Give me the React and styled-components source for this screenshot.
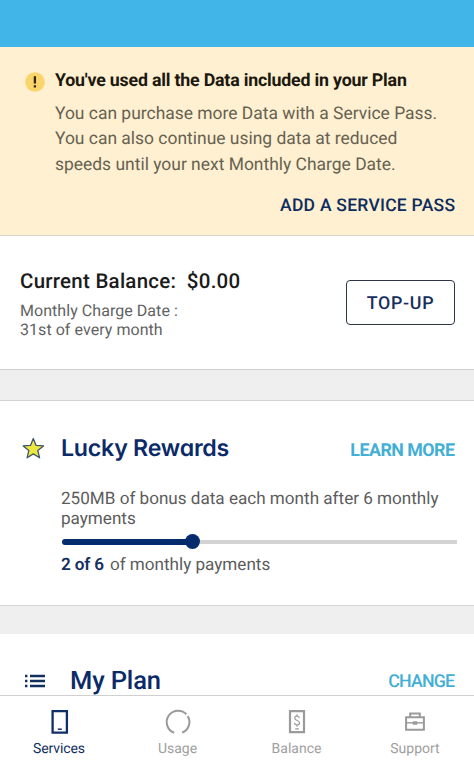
import React from 'react';
import styled, { createGlobalStyle } from 'styled-components';

const GlobalStyle = createGlobalStyle`
  * { box-sizing: border-box; }
  body { margin: 0; background: #fff; font-family: Roboto, "Liberation Sans", sans-serif; text-rendering: geometricPrecision; }
  h1, h2, p { margin: 0; }
  button { font-family: inherit; padding: 0; border: 0; background: none; text-rendering: inherit; }
`;

const Screen = styled.div`
  width: 474px;
  height: 765px;
  overflow: hidden;
  display: flex;
  flex-direction: column;
  background: #fff;
  white-space: nowrap;
`;

const StatusBar = styled.div`
  flex: 0 0 47px;
  background: #41b5e8;
`;

const Notice = styled.section`
  flex: 0 0 189px;
  display: grid;
  grid-template-columns: 30px 1fr;
  align-content: start;
  padding: 19px 19px 0 25px;
  background: #fef0d0;
  border-bottom: 1px solid #d9d4c8;
`;

const NoticeIcon = styled.svg`
  width: 20px;
  height: 20px;
  margin-top: 6px;
`;

const NoticeTitle = styled.h1`
  padding-top: 1px;
  font-size: 17.8px;
  line-height: 28px;
  font-weight: 700;
  letter-spacing: -0.2px;
  color: #1c180f;
`;

const NoticeText = styled.p`
  margin-top: 7px;
  font-size: 17.45px;
  line-height: 25.4px;
  letter-spacing: 0;
  color: #666152;
`;

const Action = styled.button`
  font-size: ${(p) => p.$size || 18}px;
  line-height: 24px;
  font-weight: ${(p) => p.$weight || 500};
  letter-spacing: ${(p) => p.$track || 0}px;
  margin-right: ${(p) => -(p.$track || 0)}px;
  margin-top: ${(p) => p.$drop || 0}px;
  color: ${(p) => (p.$dark ? '#0d2b5e' : '#43afd6')};
`;

const NoticeAction = styled.div`
  grid-column: 1 / -1;
  display: flex;
  justify-content: flex-end;
  margin-top: 16px;
`;

const BalanceSection = styled.section`
  flex: 0 0 134px;
  display: flex;
  justify-content: space-between;
  align-items: flex-start;
  padding: 32px 19px 0 20px;
  border-bottom: 1px solid #cfcfcf;
`;

const BalanceTitle = styled.h2`
  font-size: 20.5px;
  line-height: 28px;
  font-weight: 500;
  letter-spacing: 0.25px;
  white-space: pre;
  color: #1b1b1b;
`;

const ChargeDate = styled.p`
  margin-top: 6.2px;
  font-size: 16px;
  line-height: 18.4px;
  letter-spacing: 0.05px;
  color: #626262;
`;

const TopUp = styled.button`
  width: 109px;
  height: 45px;
  margin-top: 12px;
  padding-top: 1px;
  border: 1.5px solid #2c3647;
  border-radius: 4px;
  font-size: 17.8px;
  font-weight: 500;
  letter-spacing: 0.7px;
  color: #15305c;
`;

const Gap = styled.div`
  flex: 0 0 ${(p) => p.$height}px;
  background: #efefef;
  border-bottom: ${(p) => (p.$line ? '1px solid #d2d2d2' : '0')};
`;

const Rewards = styled.section`
  flex: 0 0 205px;
  padding: 32px 17px 0 22px;
  border-bottom: 1px solid #d4d4d4;
`;

const HeadRow = styled.div`
  display: flex;
  align-items: center;
  height: 30px;
  padding-right: 2px;
`;

const StarIcon = styled.svg`
  width: 23px;
  height: 23px;
  flex: none;
`;

const RewardsTitle = styled.h2`
  flex: 1;
  margin-left: 16px;
  font-family: Inter, Roboto, sans-serif;
  font-feature-settings: "cv11" 1;
  font-size: 23.2px;
  line-height: 30px;
  font-weight: 600;
  letter-spacing: -0.25px;
  color: #0b2a69;
`;

const RewardsBody = styled.div`
  padding: 26px 0 0 39px;
`;

const RewardsText = styled.p`
  font-size: 17.1px;
  line-height: 20px;
  letter-spacing: 0;
  color: #5c5c5c;
`;

const Track = styled.div`
  display: flex;
  align-items: center;
  height: 15px;
  margin: 5px 0 6px 1px;
`;

const Done = styled.div`
  flex: 0 0 125px;
  height: 6px;
  border-radius: 3px 0 0 3px;
  background: #042c6c;
`;

const Thumb = styled.div`
  flex: 0 0 15px;
  height: 15px;
  margin-left: -2px;
  border-radius: 50%;
  background: #042c6c;
`;

const Remaining = styled.div`
  flex: 1;
  height: 4px;
  background: #d3d3d3;
`;

const Count = styled.strong`
  margin-right: 6px;
  font-weight: 600;
  letter-spacing: -0.15px;
  color: #142f60;
`;

const Plan = styled.section`
  flex: 0 0 61px;
  min-height: 0;
  display: flex;
  align-items: flex-start;
  padding: 34px 19px 0 25px;
`;

const ListIcon = styled.svg`
  width: 20px;
  height: 14px;
  margin: 6px 25px 0 0;
  flex: none;
`;

const PlanTitle = styled.h2`
  flex: 1;
  font-size: 25.5px;
  line-height: 27px;
  font-weight: 500;
  letter-spacing: -0.15px;
  color: #0b2a69;
`;

const TabBar = styled.nav`
  flex: 0 0 70px;
  display: grid;
  grid-template-columns: 118px 119px 119px 118px;
  border-top: 1px solid #d0d0d0;
  background: #fff;
`;

const Tab = styled.button`
  display: flex;
  flex-direction: column;
  align-items: center;
  padding-top: 12px;
  font-size: 14px;
  line-height: 18px;
  letter-spacing: ${(p) => (p.$active ? -0.1 : 0)}px;
  color: ${(p) => (p.$active ? '#12305f' : '#a0a0a0')};
  svg { width: 28px; height: 28px; margin-bottom: 4px; color: ${(p) => (p.$active ? '#0f2f68' : '#9a9a9a')}; }
`;

const PhoneGlyph = () => (
  <svg viewBox="0 0 28 28" fill="none" stroke="currentColor">
    <path d="M7.6 3.2h14.3v21.4H7.6z" strokeWidth="2.3" />
    <path d="M12.8 21.2h4" strokeWidth="1.5" />
  </svg>
);

const UsageGlyph = () => (
  <svg viewBox="0 0 28 28" fill="none" stroke="currentColor" strokeWidth="2">
    <path d="M10.1 24.8A11.4 11.4 0 1 1 22.4 6.3" />
    <path d="M23.7 8.1A11.4 11.4 0 0 1 18.2 24.7" />
  </svg>
);

const MoneyGlyph = () => (
  <svg viewBox="0 0 28 28" fill="none" stroke="currentColor">
    <path d="M7 3.1h14v21H7z" strokeWidth="2.2" />
    <path d="M16.4 10.1c-.2-1.3-1.1-2-2.4-2s-2.3.7-2.3 2c0 3.2 4.8 1.6 4.8 4.7 0 1.4-1 2.1-2.5 2.1s-2.4-.8-2.5-2.1M14 6.2v2M14 16.8v2" strokeWidth="1.2" />
    <path d="M12.2 20.9h3.6" strokeWidth="1.3" />
  </svg>
);

const CaseGlyph = () => (
  <svg viewBox="0 0 28 28" fill="none" stroke="currentColor">
    <path d="M5.1 9.2h17.8v12.6H5.1z" strokeWidth="2" />
    <path d="M9.2 9V5.6h9.6V9" strokeWidth="2" />
    <path d="M5 14.8h18" strokeWidth="1.4" />
    <path d="M11.7 13.3h4.6v3.4h-4.6z" fill="currentColor" stroke="none" />
  </svg>
);

const tabs = [
  { label: 'Services', Icon: PhoneGlyph, active: true },
  { label: 'Usage', Icon: UsageGlyph },
  { label: 'Balance', Icon: MoneyGlyph },
  { label: 'Support', Icon: CaseGlyph },
];

export default function App() {
  return (
    <>
      <GlobalStyle />
      <Screen>
        <StatusBar />
        <Notice>
          <NoticeIcon viewBox="0 0 20 20">
            <circle cx="10" cy="10" r="9.8" fill="#fad56b" />
            <path d="M9.9 4.2v7.3M9.9 13.3v2.3" stroke="#33270f" strokeWidth="2.3" />
          </NoticeIcon>
          <div>
            <NoticeTitle>You've used all the Data included in your Plan</NoticeTitle>
            <NoticeText>
              You can purchase more Data with a Service Pass.<br />
              You can also continue using data at reduced<br />
              speeds until your next Monthly Charge Date.
            </NoticeText>
          </div>
          <NoticeAction>
            <Action $dark $size={17.5} $track={0.25}>ADD A SERVICE PASS</Action>
          </NoticeAction>
        </Notice>
        <BalanceSection>
          <div>
            <BalanceTitle>{'Current Balance:  $0.00'}</BalanceTitle>
            <ChargeDate>Monthly Charge Date :<br />31st of every month</ChargeDate>
          </div>
          <TopUp>TOP-UP</TopUp>
        </BalanceSection>
        <Gap $height={31} $line />
        <Rewards>
          <HeadRow>
            <StarIcon viewBox="0 0 23 23">
              <path d="M11.3 1.5l2.8 6.9 7.4.5-5.7 4.7 1.8 7.2-6.3-3.9-6.2 3.9 1.7-7.2L1.2 8.9l7.3-.5z" fill="#ece83f" stroke="#40566a" strokeWidth="1.3" strokeLinejoin="round" />
            </StarIcon>
            <RewardsTitle>Lucky Rewards</RewardsTitle>
            <Action $weight={700} $size={17.8} $track={-0.5} $drop={6}>LEARN MORE</Action>
          </HeadRow>
          <RewardsBody>
            <RewardsText>250MB of bonus data each month after 6 monthly<br />payments</RewardsText>
            <Track><Done /><Thumb /><Remaining /></Track>
            <RewardsText><Count>2 of 6</Count>of monthly payments</RewardsText>
          </RewardsBody>
        </Rewards>
        <Gap $height={28} />
        <Plan>
          <ListIcon viewBox="0 0 20 14">
            <path d="M0 2h2.4M0 7h2.4M0 12h2.4M5 2h15M5 7h15M5 12h15" stroke="#12305f" strokeWidth="2.4" />
          </ListIcon>
          <PlanTitle>My Plan</PlanTitle>
          <Action $size={17.8} $track={-0.85} $drop={2}>CHANGE</Action>
        </Plan>
        <TabBar>
          {tabs.map(({ label, Icon, active }) => (
            <Tab key={label} $active={active}><Icon />{label}</Tab>
          ))}
        </TabBar>
      </Screen>
    </>
  );
}
